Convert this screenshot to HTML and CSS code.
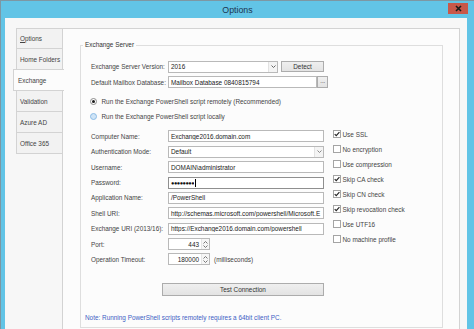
FILE: index.html
```html
<!DOCTYPE html>
<html>
<head>
<meta charset="utf-8">
<link rel="stylesheet" href="styles.css">
</head>
<body>
<div class="window">
  <div class="titlebar">
    <span></span>
    <span class="title">Options</span>
    <span class="close"><svg width="7" height="7" viewBox="0 0 7 7"><path d="M1 1 L6 6 M6 1 L1 6" stroke="#1b1b1b" stroke-width="1.6"/></svg></span>
  </div>
  <div class="client">
    <div class="tabs">
      <div class="tab"><u>O</u>ptions</div>
      <div class="tab">Home Folders</div>
      <div class="tab active">Exchange</div>
      <div class="tab">Validation</div>
      <div class="tab">Azure AD</div>
      <div class="tab">Office 365</div>
    </div>
    <div class="panel">
      <fieldset class="group">
        <legend>Exchange Server</legend>
        <div class="row">
          <span class="lbl">Exchange Server Version:</span>
          <div class="field combo w110"><span class="val">2016</span><span class="drop"><svg width="5" height="3" viewBox="0 0 5 3"><path d="M0.5 0.5 L2.5 2.5 L4.5 0.5" stroke="#666" fill="none"/></svg></span></div>
          <span class="btn detect">Detect</span>
        </div>
        <div class="row">
          <span class="lbl">Default Mailbox Database:</span>
          <div class="field w149"><span class="val">Mailbox Database 0840815794</span></div>
          <span class="btn dots">···</span>
        </div>
        <div class="radio-row first">
          <span class="radio on"></span><span>Run the Exchange PowerShell script remotely (Recommended)</span>
        </div>
        <div class="radio-row">
          <span class="radio hover"></span><span>Run the Exchange PowerShell script locally</span>
        </div>
        <div class="section">
          <div class="form">
            <span class="lbl">Computer Name:</span>
            <div class="field"><span class="val">Exchange2016.domain.com</span></div>
            <span class="lbl">Authentication Mode:</span>
            <div class="field combo"><span class="val">Default</span><span class="drop"><svg width="5" height="3" viewBox="0 0 5 3"><path d="M0.5 0.5 L2.5 2.5 L4.5 0.5" stroke="#888" fill="none"/></svg></span></div>
            <span class="lbl">Username:</span>
            <div class="field"><span class="val">DOMAIN\administrator</span></div>
            <span class="lbl">Password:</span>
            <div class="field pwd"><span class="val dots-text">●●●●●●●●</span><span class="caret"></span></div>
            <span class="lbl">Application Name:</span>
            <div class="field"><span class="val">/PowerShell</span></div>
            <span class="lbl">Shell URI:</span>
            <div class="field"><span class="val clip">http://schemas.microsoft.com/powershell/Microsoft.E</span></div>
            <span class="lbl">Exchange URI (2013/16):</span>
            <div class="field"><span class="val clip">https://Exchange2016.domain.com/powershell</span></div>
            <span class="lbl">Port:</span>
            <div class="numrow">
              <div class="field spin"><span class="num">443</span><span class="spinner"><svg width="5" height="3" viewBox="0 0 5 3"><path d="M0.5 2.5 L2.5 0.5 L4.5 2.5" stroke="#777" fill="none"/></svg><svg width="5" height="3" viewBox="0 0 5 3"><path d="M0.5 0.5 L2.5 2.5 L4.5 0.5" stroke="#777" fill="none"/></svg></span></div>
            </div>
            <span class="lbl">Operation Timeout:</span>
            <div class="numrow">
              <div class="field spin"><span class="num">180000</span><span class="spinner"><svg width="5" height="3" viewBox="0 0 5 3"><path d="M0.5 2.5 L2.5 0.5 L4.5 2.5" stroke="#777" fill="none"/></svg><svg width="5" height="3" viewBox="0 0 5 3"><path d="M0.5 0.5 L2.5 2.5 L4.5 0.5" stroke="#777" fill="none"/></svg></span></div>
              <span class="unit">(milliseconds)</span>
            </div>
          </div>
          <div class="checks">
            <div class="chk"><span class="box"><svg width="7" height="6" viewBox="0 0 7 6"><path d="M0.8 3.2 L2.6 5 L6.3 0.8" stroke="#222" stroke-width="1.3" fill="none"/></svg></span><span>Use SSL</span></div>
            <div class="chk"><span class="box"></span><span>No encryption</span></div>
            <div class="chk"><span class="box"></span><span>Use compression</span></div>
            <div class="chk"><span class="box"><svg width="7" height="6" viewBox="0 0 7 6"><path d="M0.8 3.2 L2.6 5 L6.3 0.8" stroke="#222" stroke-width="1.3" fill="none"/></svg></span><span>Skip CA check</span></div>
            <div class="chk"><span class="box"><svg width="7" height="6" viewBox="0 0 7 6"><path d="M0.8 3.2 L2.6 5 L6.3 0.8" stroke="#222" stroke-width="1.3" fill="none"/></svg></span><span>Skip CN check</span></div>
            <div class="chk"><span class="box"><svg width="7" height="6" viewBox="0 0 7 6"><path d="M0.8 3.2 L2.6 5 L6.3 0.8" stroke="#222" stroke-width="1.3" fill="none"/></svg></span><span>Skip revocation check</span></div>
            <div class="chk"><span class="box"></span><span>Use UTF16</span></div>
            <div class="chk"><span class="box"></span><span>No machine profile</span></div>
          </div>
        </div>
        <span class="btn test">Test Connection</span>
        <p class="note">Note: Running PowerShell scripts remotely requires a 64bit client PC.</p>
      </fieldset>
    </div>
  </div>
</div>
</body>
</html>
```
FILE: styles.css
```css
* { box-sizing: border-box; margin: 0; padding: 0; }
html, body { width: 474px; height: 329px; overflow: hidden; }
body {
  background: #62c4e6;
  font-family: "Liberation Sans", Arial, sans-serif;
  font-size: 6.4px;
  color: #3c3c3c;
}
.window {
  height: 329px;
  display: flex;
  flex-direction: column;
  border-top: 1px solid #7d97a3;
  border-left: 1px solid #7d97a3;
}
.titlebar {
  height: 17px;
  flex: none;
  display: grid;
  grid-template-columns: 1fr auto 1fr;
  align-items: center;
}
.title { font-size: 8.8px; color: #1d3550; }
.close {
  justify-self: end;
  align-self: start;
  margin-top: 2px;
  margin-right: 6px;
  width: 20px;
  height: 11px;
  background: #c8584a;
  display: flex;
  align-items: center;
  justify-content: center;
}
.client {
  flex: 1;
  margin-left: 4px;
  width: 462px;
  background: #f7f7f7;
  padding: 10px 7px 0 11px;
  display: flex;
  overflow: hidden;
}
.tabs { width: 47px; flex: none; display: flex; flex-direction: column; }
.tab {
  height: 21px;
  border: 1px solid #d3d3d3;
  border-top: none;
  background: #f2f2f2;
  padding-left: 3px;
  display: flex;
  align-items: center;
  color: #444;
}
.tab:first-child { border-top: 1px solid #d3d3d3; }
.tab.active {
  position: relative;
  z-index: 2;
  width: 51px;
  margin-left: -3px;
  height: 22px;
  margin-top: -1px;
  border-top: 1px solid #d3d3d3;
  border-right: none;
  background: #fcfcfc;
  padding-left: 4px;
}
.panel {
  flex: 1;
  margin-left: -1px;
  border: 1px solid #d3d3d3;
  border-bottom: none;
  background: #fcfcfc;
  padding: 12px 0 0 17px;
}
.group {
  width: 363px;
  border: 1px solid #dedede;
  padding: 10px 0 5px 10px;
  min-width: 0;
}
.group legend {
  margin-left: -8px;
  padding: 0 2px;
  line-height: 8px;
  color: #333;
}
.row { display: flex; align-items: center; height: 15.4px; }
.lbl { width: 77px; flex: none; white-space: nowrap; color: #444; }
.field {
  height: 12px;
  border: 1px solid #b9b9b9;
  background: #fff;
  display: flex;
  align-items: center;
  color: #222;
  overflow: hidden;
  white-space: nowrap;
}
.val { padding-left: 2px; flex: 1; overflow: hidden; }
.w110 { width: 110px; }
.w149 { width: 149px; }
.combo .drop {
  width: 9px;
  height: 100%;
  flex: none;
  display: flex;
  align-items: center;
  justify-content: center;
  border-left: 1px solid #e2e2e2;
  background: #f4f4f4;
}
.btn {
  display: flex;
  align-items: center;
  justify-content: center;
  background: linear-gradient(#efefef, #e3e3e3);
  border: 1px solid #acacac;
  color: #333;
}
.detect { margin-left: 3px; width: 43px; height: 11px; }
.dots { width: 11px; height: 12px; color: #555; letter-spacing: -0.5px; }
.radio-row { display: flex; align-items: center; height: 15px; margin-left: -1.5px; color: #444; }
.radio-row.first { margin-top: 4.4px; }
.radio {
  width: 7px;
  height: 7px;
  border-radius: 50%;
  border: 1px solid #8a8a8a;
  background: #fff;
  margin-right: 5px;
  flex: none;
  display: flex;
  align-items: center;
  justify-content: center;
}
.radio.on::after { content: ""; width: 3px; height: 3px; border-radius: 50%; background: #1a1a1a; }
.radio.hover { border-color: #8cbbe6; background: #cfe4f6; }
.section { display: flex; align-items: flex-start; margin-top: 4.5px; }
.form {
  display: grid;
  grid-template-columns: 77px 156px;
  grid-auto-rows: 15.4px;
  align-items: center;
}
.clip { text-overflow: clip; }
.pwd { border-color: #8f8f8f; }
.dots-text { flex: none; font-size: 5.6px; letter-spacing: -0.5px; padding-left: 2px; color: #111; }
.caret { width: 1px; height: 8px; background: #000; margin-left: 1px; }
.numrow { display: flex; align-items: center; }
.spin { width: 42px; }
.spin .num { flex: 1; text-align: right; padding-right: 2px; }
.spinner {
  width: 8px;
  height: 100%;
  flex: none;
  display: flex;
  flex-direction: column;
  align-items: center;
  justify-content: center;
  gap: 1px;
  border-left: 1px solid #e6e6e6;
  background: #f6f6f6;
}
.unit { margin-left: 4px; color: #444; }
.checks { margin-left: 9px; margin-top: -2px; display: flex; flex-direction: column; }
.chk { height: 15px; display: flex; align-items: center; color: #444; white-space: nowrap; }
.box {
  width: 8px;
  height: 8px;
  border: 1px solid #a4a4a4;
  background: #fff;
  margin-right: 1.5px;
  display: flex;
  align-items: center;
  justify-content: center;
  flex: none;
}
.test { margin-top: 15.4px; margin-left: 71px; width: 162px; height: 13px; }
.note { margin-top: 18px; margin-left: -6px; line-height: 8px; color: #3d5fc4; }
```
